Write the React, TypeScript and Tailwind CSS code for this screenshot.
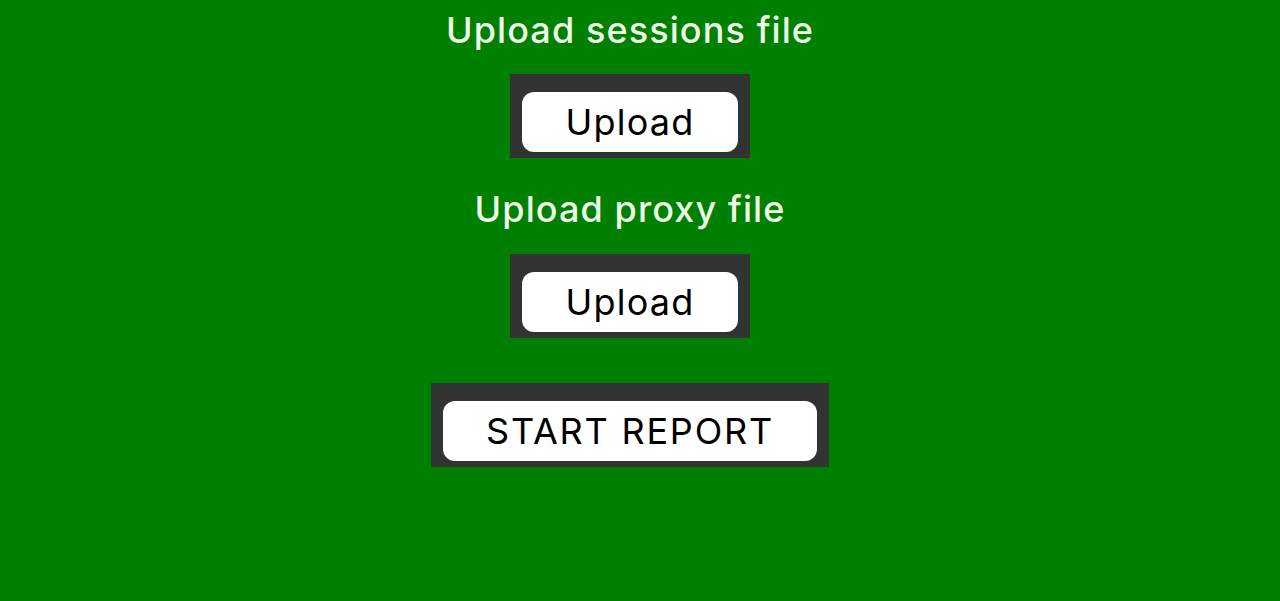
import React from "react";

function Btn({ label, w, track }: { label: string; w: string; track: string }) {
  return (
    <div className="bg-[#333333] pt-[18px] pb-[6px] px-[12px]">
      <button
        className={`${w} ${track} h-[60px] rounded-[12px] bg-white text-black text-[36px] leading-none flex items-center justify-center`}
        style={{ fontFamily: "Inter, 'Noto Sans', sans-serif" }}
      >
        {label}
      </button>
    </div>
  );
}

export default function App() {
  return (
    <div
      className="min-h-screen w-full bg-[#008000] flex flex-col items-center pt-[8px] pr-[20px]"
      style={{ fontFamily: "Inter, 'Noto Sans', sans-serif" }}
    >
      <h1 className="text-[36px] leading-[44px] tracking-[1.1px] text-[#eefce8] font-medium">Upload sessions file</h1>
      <div className="mt-[22px]">
        <Btn label="Upload" w="w-[216px]" track="tracking-[1.2px]" />
      </div>
      <h1 className="mt-[29px] text-[36px] leading-[44px] tracking-[1.1px] text-[#eefce8] font-medium">Upload proxy file</h1>
      <div className="mt-[23px]">
        <Btn label="Upload" w="w-[216px]" track="tracking-[1.2px]" />
      </div>
      <div className="mt-[45px]">
        <Btn label="START REPORT" w="w-[374px]" track="tracking-[1.8px]" />
      </div>
    </div>
  );
}
